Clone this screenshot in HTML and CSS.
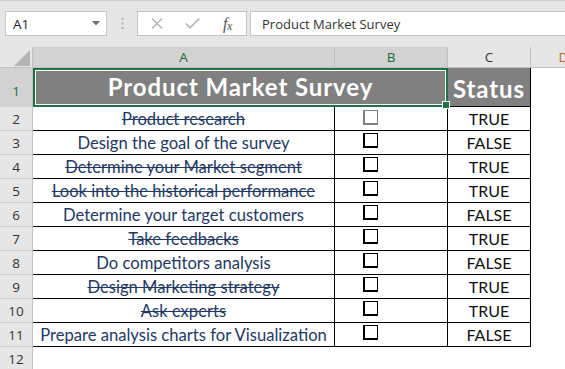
FILE: index.html
```html
<!DOCTYPE html>
<html>
<head>
<meta charset="utf-8">
<link rel="stylesheet" href="styles.css">
</head>
<body>
<div class="toolbar">
  <div class="namebox">
    <span class="nb-text">A1</span>
    <svg class="nb-arrow" width="8" height="5" viewBox="0 0 8 5"><path d="M0 0H8L4 4.5Z" fill="#707070"/></svg>
  </div>
  <div class="grip">
    <svg width="3" height="11" viewBox="0 0 3 11"><rect x="0.5" y="0" width="2" height="2" fill="#b4b4b4"/><rect x="0.5" y="4.5" width="2" height="2" fill="#b4b4b4"/><rect x="0.5" y="9" width="2" height="2" fill="#b4b4b4"/></svg>
  </div>
  <div class="fbtns">
    <svg class="fb-x" width="12" height="11" viewBox="0 0 12 11"><path d="M1 0.5L11 10.5M11 0.5L1 10.5" stroke="#b4b4b4" stroke-width="1.4" fill="none"/></svg>
    <svg class="fb-ok" width="15" height="11" viewBox="0 0 15 11"><path d="M0.8 5.5L5 9.8L14.2 0.6" stroke="#b4b4b4" stroke-width="1.6" fill="none"/></svg>
    <span class="fb-fx">f<sub>x</sub></span>
  </div>
  <div class="formula">Product Market Survey</div>
</div>

<div class="sheet">
  <div class="corner"><svg width="16" height="16" viewBox="0 0 16 16"><path d="M16 0V16H0Z" fill="#b4b4b4"/></svg></div>
  <div class="ch sel">A</div>
  <div class="ch sel">B</div>
  <div class="ch">C</div>
  <div class="ch d">D</div>

  <div class="rh sel r1">1</div>
  <div class="title">Product Market Survey<span class="handle"></span></div>
  <div class="status">Status</div>
  <div class="blank"></div>

  <div class="rh">2</div>
  <div class="task done">Product research</div>
  <div class="chkcell"><span class="chk dim"></span></div>
  <div class="val">TRUE</div>
  <div class="blank"></div>

  <div class="rh">3</div>
  <div class="task">Design the goal of the survey</div>
  <div class="chkcell"><span class="chk"></span></div>
  <div class="val">FALSE</div>
  <div class="blank"></div>

  <div class="rh">4</div>
  <div class="task done">Determine your Market segment</div>
  <div class="chkcell"><span class="chk"></span></div>
  <div class="val">TRUE</div>
  <div class="blank"></div>

  <div class="rh">5</div>
  <div class="task done">Look into the historical performance</div>
  <div class="chkcell"><span class="chk"></span></div>
  <div class="val">TRUE</div>
  <div class="blank"></div>

  <div class="rh">6</div>
  <div class="task">Determine your target customers</div>
  <div class="chkcell"><span class="chk"></span></div>
  <div class="val">FALSE</div>
  <div class="blank"></div>

  <div class="rh">7</div>
  <div class="task done">Take feedbacks</div>
  <div class="chkcell"><span class="chk"></span></div>
  <div class="val">TRUE</div>
  <div class="blank"></div>

  <div class="rh">8</div>
  <div class="task">Do competitors analysis</div>
  <div class="chkcell"><span class="chk"></span></div>
  <div class="val">FALSE</div>
  <div class="blank"></div>

  <div class="rh">9</div>
  <div class="task done">Design Marketing strategy</div>
  <div class="chkcell"><span class="chk"></span></div>
  <div class="val">TRUE</div>
  <div class="blank"></div>

  <div class="rh">10</div>
  <div class="task done">Ask experts</div>
  <div class="chkcell"><span class="chk"></span></div>
  <div class="val">TRUE</div>
  <div class="blank"></div>

  <div class="rh">11</div>
  <div class="task">Prepare analysis charts for Visualization</div>
  <div class="chkcell"><span class="chk"></span></div>
  <div class="val">FALSE</div>
  <div class="blank"></div>

  <div class="rh">12</div>
  <div class="blank"></div>
  <div class="blank"></div>
  <div class="blank"></div>
  <div class="blank"></div>
</div>
</body>
</html>
```

FILE: styles.css
```css
html, body {
  margin: 0;
  padding: 0;
  width: 565px;
  height: 369px;
  overflow: hidden;
  background: #ffffff;
}

.toolbar {
  height: 47px;
  box-sizing: border-box;
  background: #e6e6e6;
  border-top: 1px solid #d2d2d2;
  display: flex;
  align-items: flex-start;
  padding-top: 10px;
  padding-left: 5px;
  font-family: "Open Sans", "Noto Sans", sans-serif;
}

.namebox {
  width: 102px;
  height: 25px;
  box-sizing: border-box;
  background: #fff;
  border: 1px solid #c6c6c6;
  display: flex;
  align-items: center;
  justify-content: space-between;
  padding: 0 6px 0 7px;
}

.nb-text {
  font-size: 13.5px;
  color: #222;
}

.grip {
  width: 30px;
  height: 25px;
  display: flex;
  align-items: center;
  justify-content: center;
}

.fbtns {
  width: 110px;
  height: 25px;
  box-sizing: border-box;
  background: #fff;
  border: 1px solid #c6c6c6;
  display: flex;
  align-items: center;
  padding-left: 13px;
}

.fb-x { margin-right: 22px; }
.fb-ok { margin-right: 23px; }

.fb-fx {
  font-family: "Liberation Serif", "DejaVu Serif", serif;
  font-style: italic;
  font-size: 16px;
  color: #555;
  line-height: 1;
  letter-spacing: -0.5px;
}
.fb-fx sub {
  font-size: 12px;
  vertical-align: -1px;
}

.formula {
  flex: 1;
  margin-left: 3px;
  height: 25px;
  box-sizing: border-box;
  background: #fff;
  border: 1px solid #c6c6c6;
  border-right: none;
  display: flex;
  align-items: center;
  padding-left: 11px;
  font-size: 13px;
  color: #333;
}

.sheet {
  display: grid;
  grid-template-columns: 33px 302px 113px 83px 66px;
  grid-template-rows: 21px 39px repeat(11, 24px);
  width: max-content;
  font-family: Lato, "Open Sans", sans-serif;
}

.sheet > div {
  box-sizing: border-box;
}

.corner {
  background: #e6e6e6;
  border-right: 1px solid #c0c0c0;
  border-bottom: 1px solid #c0c0c0;
  display: flex;
  align-items: flex-end;
  justify-content: flex-end;
  padding: 0 2px 1px 0;
}

.ch {
  background: #e6e6e6;
  border-right: 1px solid #c0c0c0;
  border-bottom: 1px solid #c0c0c0;
  display: flex;
  align-items: center;
  justify-content: center;
  font-family: "Open Sans", "Noto Sans", sans-serif;
  font-size: 13.5px;
  color: #333;
}
.ch.sel {
  background: #d2d2d2;
  color: #1d6a3f;
}
.ch.d {
  color: #b86a2a;
}

.rh {
  background: #e6e6e6;
  border-right: 1px solid #c0c0c0;
  border-bottom: 1px solid #d0d0d0;
  display: flex;
  align-items: center;
  justify-content: center;
  font-family: "Open Sans", "Noto Sans", sans-serif;
  font-size: 13.5px;
  color: #333;
  padding-top: 1px;
}
.rh.sel {
  background: #d2d2d2;
  color: #1d6a3f;
}
.rh.r1 {
  padding-top: 8px;
}

.title {
  grid-column: span 2;
  position: relative;
  background: #808080;
  border: 2px solid #217346;
  box-shadow: inset 0 0 0 1px #ffffff;
  color: #fff;
  font-weight: 700;
  font-size: 24px;
  letter-spacing: 0.9px;
  line-height: 28px;
  display: flex;
  align-items: flex-end;
  justify-content: center;
  padding-bottom: 4px;
}

.handle {
  position: absolute;
  right: -4px;
  bottom: -4px;
  width: 6px;
  height: 6px;
  background: #217346;
  border: 1px solid #fff;
}

.status {
  background: #808080;
  border-bottom: 1px solid #000;
  border-right: 1px solid #000;
  color: #fff;
  font-weight: 700;
  font-size: 24px;
  letter-spacing: 0.9px;
  line-height: 28px;
  display: flex;
  align-items: flex-end;
  justify-content: center;
  padding-bottom: 3px;
}

.blank {
  background: #fff;
}

.task, .chkcell, .val {
  border-right: 1px solid #000;
  border-bottom: 1px solid #000;
  background: #fff;
}

.task {
  display: flex;
  align-items: flex-end;
  justify-content: center;
  font-size: 16.6px;
  line-height: 20px;
  padding-bottom: 1px;
  color: #1f3864;
  white-space: nowrap;
}
.task.done {
  text-decoration: line-through;
  text-decoration-thickness: 1px;
}

.chkcell {
  display: flex;
  align-items: flex-start;
  padding: 2px 0 0 28px;
}

.chk {
  width: 15px;
  height: 15px;
  box-sizing: border-box;
  border: 1px solid #000;
  border-left-width: 2px;
  border-bottom-width: 2px;
  background: #fff;
}
.chk.dim {
  border-color: #808080;
  margin-top: 1px;
}

.val {
  display: flex;
  align-items: flex-end;
  justify-content: center;
  font-size: 16px;
  line-height: 20px;
  padding-bottom: 1px;
  color: #111;
}
```
